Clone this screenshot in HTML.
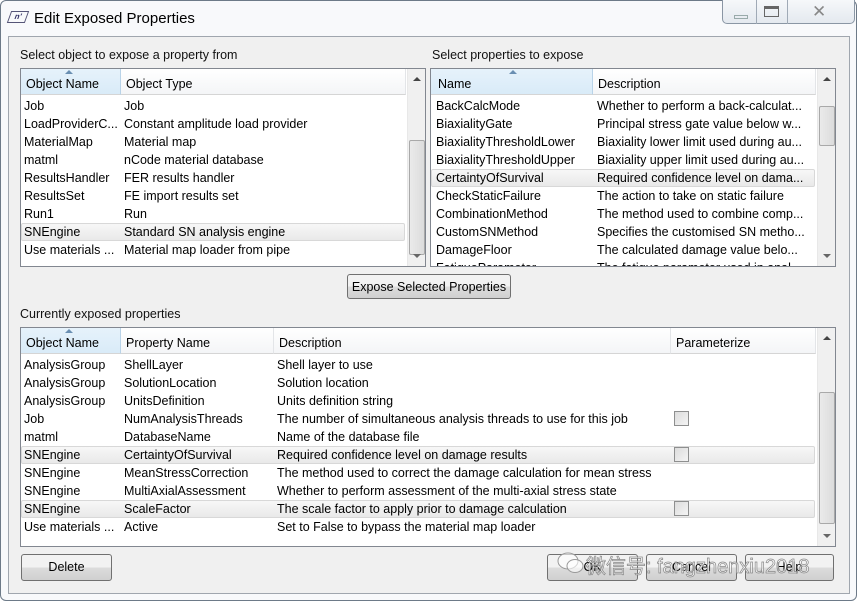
<!DOCTYPE html><html><head><meta charset="utf-8"><style>
*{box-sizing:border-box;margin:0;padding:0}
body{width:857px;height:601px;background:#fff;font-family:"Liberation Sans","DejaVu Sans",sans-serif;font-size:12px;color:#000;position:relative;overflow:hidden}
.a{position:absolute}
.frame{left:0;top:0;width:857px;height:601px;border:1px solid #6d7a88;border-radius:6px;background:#f8f9fb}
.panel{left:8px;top:36px;width:842px;height:558px;background:#f0f0f0;border:1px solid #a0a6ae}
.lbl{font-size:12.5px;color:#111}
.list{background:#fff;border:1px solid #828790;overflow:hidden}
.hdr{position:absolute;top:0;height:26px;background:linear-gradient(#fff,#f4f5f7);border-bottom:1px solid #d5d5d5;border-right:1px solid #e3e5e8;padding:8px 0 0 5px;font-size:12.5px;white-space:nowrap}
.hdr.s{background:linear-gradient(#e6f2fb,#d9ebf8);border-right:1px solid #b9d3e8}
.hdr.s i{position:absolute;left:44px;top:1px;border:4px solid transparent;border-bottom:4px solid #6a8fb2;border-top:0}
.row{position:absolute;height:18px;font-size:12.5px;white-space:nowrap}
.row span{position:absolute;top:2px}
.sel{background:linear-gradient(#f7f7f7,#e9e9e9);border:1px solid #d8d8d8;border-radius:2px}
.sb{position:absolute;top:0;width:18px;background:#f0f0f0;border-left:1px solid #e8e8e8}
.thumb{position:absolute;left:1px;width:16px;background:linear-gradient(90deg,#eaeaea,#dcdcdc);border:1px solid #a9a9a9;border-radius:2px}
.up,.dn{position:absolute;left:5px;border:4px solid transparent}
.up{top:8px;border-bottom:4px solid #444;border-top:0}
.dn{bottom:8px;border-top:4px solid #666;border-bottom:0}
.btn{position:absolute;border:1px solid #707070;border-radius:3px;background:linear-gradient(#f2f2f2 50%,#dcdcdc 50%,#d0d0d0);text-align:center;font-size:12.5px;padding-top:5px}
.cb{position:absolute;width:15px;height:15px;border:1px solid #8e8f8f;background:linear-gradient(135deg,#dcdcdc,#f4f4f4)}
</style></head><body>
<div class="a frame"></div>
<div class="a" style="left:9px;top:11px;width:18px;height:12px;border:1px solid #557;transform:skewX(-20deg);font-size:8px;font-weight:bold;color:#336;line-height:10px;text-align:center">n'</div>
<div class="a" style="left:34px;top:10px;font-size:15px;color:#000">Edit Exposed Properties</div>
<div class="a" style="left:722px;top:0;width:133px;height:24px;border:1px solid #8a96a4;border-top:0;border-radius:0 0 5px 5px;background:linear-gradient(#f6f8fa,#e4e9ef)"></div>
<div class="a" style="left:756px;top:0;width:1px;height:24px;background:#a0aab6"></div>
<div class="a" style="left:787px;top:0;width:1px;height:24px;background:#a0aab6"></div>
<div class="a" style="left:734px;top:15px;width:14px;height:4px;border:1px solid #9aa;"></div>
<div class="a" style="left:764px;top:6px;width:15px;height:11px;border:1px solid #666;border-top:3px solid #666"></div>
<div class="a" style="left:812px;top:2px;font-size:17px;color:#888">✕</div>

<div class="a panel"></div>
<div class="a lbl" style="left:20px;top:48px">Select object to expose a property from</div>
<div class="a lbl" style="left:432px;top:48px">Select properties to expose</div>

<!-- list1 -->
<div class="a list" style="left:20px;top:68px;width:406px;height:199px">
<div class="hdr s" style="left:0;width:100px"><i></i>Object Name</div>
<div class="hdr" style="left:100px;width:285px">Object Type</div>
<div class="row" style="left:0;top:28px;width:385px"><span style="left:3px">Job</span><span style="left:103px">Job</span></div>
<div class="row" style="left:0;top:46px;width:385px"><span style="left:3px">LoadProviderC...</span><span style="left:103px">Constant amplitude load provider</span></div>
<div class="row" style="left:0;top:64px;width:385px"><span style="left:3px">MaterialMap</span><span style="left:103px">Material map</span></div>
<div class="row" style="left:0;top:82px;width:385px"><span style="left:3px">matml</span><span style="left:103px">nCode material database</span></div>
<div class="row" style="left:0;top:100px;width:385px"><span style="left:3px">ResultsHandler</span><span style="left:103px">FER results handler</span></div>
<div class="row" style="left:0;top:118px;width:385px"><span style="left:3px">ResultsSet</span><span style="left:103px">FE import results set</span></div>
<div class="row" style="left:0;top:136px;width:385px"><span style="left:3px">Run1</span><span style="left:103px">Run</span></div>
<div class="row sel" style="left:0;top:154px;width:384px"><span style="left:2px;top:1px">SNEngine</span><span style="left:102px;top:1px">Standard SN analysis engine</span></div>
<div class="row" style="left:0;top:172px;width:385px"><span style="left:3px">Use materials ...</span><span style="left:103px">Material map loader from pipe</span></div>
<div class="sb" style="left:386px;height:197px"><div class="up"></div><div class="thumb" style="top:71px;height:115px"></div><div class="dn"></div></div>
</div>

<!-- list2 -->
<div class="a list" style="left:430px;top:68px;width:406px;height:199px">
<div class="hdr s" style="left:0;width:162px;padding-left:7px"><i style="left:78px"></i>Name</div>
<div class="hdr" style="left:162px;width:223px">Description</div>
<div class="row" style="left:0;top:28px;width:385px"><span style="left:5px">BackCalcMode</span><span style="left:166px">Whether to perform a back-calculat...</span></div>
<div class="row" style="left:0;top:46px;width:385px"><span style="left:5px">BiaxialityGate</span><span style="left:166px">Principal stress gate value below w...</span></div>
<div class="row" style="left:0;top:64px;width:385px"><span style="left:5px">BiaxialityThresholdLower</span><span style="left:166px">Biaxiality lower limit used during au...</span></div>
<div class="row" style="left:0;top:82px;width:385px"><span style="left:5px">BiaxialityThresholdUpper</span><span style="left:166px">Biaxiality upper limit used during au...</span></div>
<div class="row sel" style="left:0;top:100px;width:384px"><span style="left:4px;top:1px">CertaintyOfSurvival</span><span style="left:165px;top:1px">Required confidence level on dama...</span></div>
<div class="row" style="left:0;top:118px;width:385px"><span style="left:5px">CheckStaticFailure</span><span style="left:166px">The action to take on static failure</span></div>
<div class="row" style="left:0;top:136px;width:385px"><span style="left:5px">CombinationMethod</span><span style="left:166px">The method used to combine comp...</span></div>
<div class="row" style="left:0;top:154px;width:385px"><span style="left:5px">CustomSNMethod</span><span style="left:166px">Specifies the customised SN metho...</span></div>
<div class="row" style="left:0;top:172px;width:385px"><span style="left:5px">DamageFloor</span><span style="left:166px">The calculated damage value belo...</span></div>
<div class="row" style="left:0;top:190px;width:385px"><span style="left:5px">FatigueParameter</span><span style="left:166px">The fatigue parameter used in anal...</span></div>
<div class="sb" style="left:386px;height:197px"><div class="up"></div><div class="thumb" style="top:37px;height:40px"></div><div class="dn"></div></div>
</div>

<div class="btn" style="left:347px;top:274px;width:164px;height:25px">Expose Selected Properties</div>
<div class="a lbl" style="left:20px;top:307px">Currently exposed properties</div>

<!-- list3 -->
<div class="a list" style="left:20px;top:327px;width:816px;height:220px">
<div class="hdr s" style="left:0;width:100px"><i></i>Object Name</div>
<div class="hdr" style="left:100px;width:153px">Property Name</div>
<div class="hdr" style="left:253px;width:397px">Description</div>
<div class="hdr" style="left:650px;width:145px">Parameterize</div>
<div class="row" style="left:0;top:28px;width:795px"><span style="left:3px">AnalysisGroup</span><span style="left:103px">ShellLayer</span><span style="left:256px">Shell layer to use</span></div>
<div class="row" style="left:0;top:46px;width:795px"><span style="left:3px">AnalysisGroup</span><span style="left:103px">SolutionLocation</span><span style="left:256px">Solution location</span></div>
<div class="row" style="left:0;top:64px;width:795px"><span style="left:3px">AnalysisGroup</span><span style="left:103px">UnitsDefinition</span><span style="left:256px">Units definition string</span></div>
<div class="row" style="left:0;top:82px;width:795px"><span style="left:3px">Job</span><span style="left:103px">NumAnalysisThreads</span><span style="left:256px">The number of simultaneous analysis threads to use for this job</span><div class="cb" style="left:653px;top:1px"></div></div>
<div class="row" style="left:0;top:100px;width:795px"><span style="left:3px">matml</span><span style="left:103px">DatabaseName</span><span style="left:256px">Name of the database file</span></div>
<div class="row sel" style="left:0;top:118px;width:794px"><span style="left:2px;top:1px">SNEngine</span><span style="left:102px;top:1px">CertaintyOfSurvival</span><span style="left:255px;top:1px">Required confidence level on damage results</span><div class="cb" style="left:652px;top:0"></div></div>
<div class="row" style="left:0;top:136px;width:795px"><span style="left:3px">SNEngine</span><span style="left:103px">MeanStressCorrection</span><span style="left:256px">The method used to correct the damage calculation for mean stress</span></div>
<div class="row" style="left:0;top:154px;width:795px"><span style="left:3px">SNEngine</span><span style="left:103px">MultiAxialAssessment</span><span style="left:256px">Whether to perform assessment of the multi-axial stress state</span></div>
<div class="row sel" style="left:0;top:172px;width:794px"><span style="left:2px;top:1px">SNEngine</span><span style="left:102px;top:1px">ScaleFactor</span><span style="left:255px;top:1px">The scale factor to apply prior to damage calculation</span><div class="cb" style="left:652px;top:0"></div></div>
<div class="row" style="left:0;top:190px;width:795px"><span style="left:3px">Use materials ...</span><span style="left:103px">Active</span><span style="left:256px">Set to False to bypass the material map loader</span></div>
<div class="sb" style="left:796px;height:218px"><div class="up"></div><div class="thumb" style="top:64px;height:132px"></div><div class="dn"></div></div>
</div>

<div class="btn" style="left:21px;top:554px;width:91px;height:27px">Delete</div>
<div class="btn" style="left:547px;top:554px;width:91px;height:27px">OK</div>
<div class="btn" style="left:646px;top:554px;width:91px;height:27px">Cancel</div>
<div class="btn" style="left:745px;top:554px;width:89px;height:27px">Help</div>
<svg class="a" style="left:556px;top:550px" width="30" height="26" viewBox="0 0 30 26"><ellipse cx="12" cy="11" rx="10" ry="8" fill="rgba(255,255,255,.6)" stroke="#999"/><ellipse cx="19" cy="16" rx="8" ry="6.5" fill="rgba(255,255,255,.6)" stroke="#999"/></svg>
<div class="a" style="left:586px;top:550px;font-family:'Liberation Sans','Noto Sans CJK SC',sans-serif;font-size:20px;color:rgba(255,255,255,0.6);-webkit-text-stroke:0.7px #888;white-space:nowrap">微信号: fangzhenxiu2018</div>
</body></html>
